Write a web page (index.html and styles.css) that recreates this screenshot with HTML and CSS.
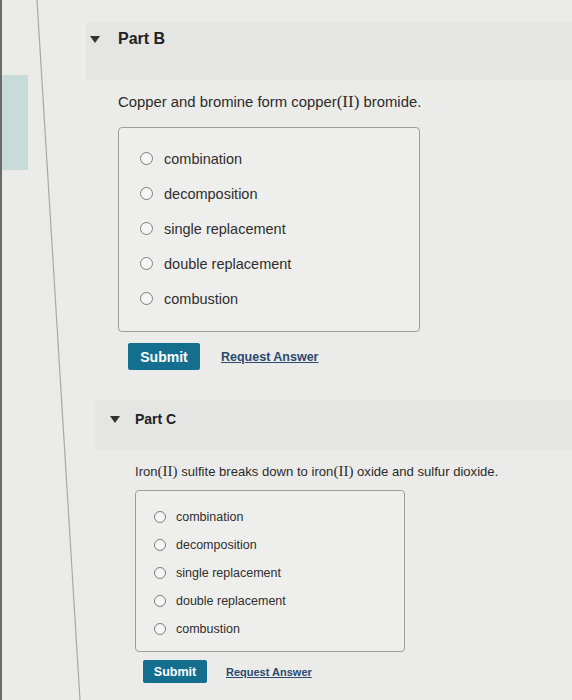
FILE: index.html
```html
<!DOCTYPE html>
<html lang="en">
<head>
    <meta charset="UTF-8">
    <meta name="viewport" content="width=device-width, initial-scale=1.0">
    <title>Parts B and C</title>
    <link rel="stylesheet" href="styles.css">
</head>
<body>
    <div class="page">
        <div class="rail">
            <svg width="86" height="700" viewBox="0 0 86 700">
                <rect x="0" y="0" width="2" height="700" fill="#6a6a6a"/>
                <rect x="2" y="75" width="26" height="95" fill="#c8dbd8"/>
                <line x1="37" y1="0" x2="80" y2="700" stroke="#a9a9a9" stroke-width="1.2"/>
            </svg>
        </div>

        <div class="main">
            <div class="part part-b">
                <div class="part-head">
                    <svg class="caret" width="10" height="7" viewBox="0 0 10 7"><path d="M0 0 L10 0 L5 7 Z" fill="#333"/></svg>
                    <span class="part-title">Part B</span>
                </div>
                <div class="part-body">
                    <p class="question">Copper and bromine form copper<span class="roman">(II)</span> bromide.</p>
                    <div class="choices">
                        <label class="choice"><span class="radio"></span>combination</label>
                        <label class="choice"><span class="radio"></span>decomposition</label>
                        <label class="choice"><span class="radio"></span>single replacement</label>
                        <label class="choice"><span class="radio"></span>double replacement</label>
                        <label class="choice"><span class="radio"></span>combustion</label>
                    </div>
                    <div class="actions">
                        <button type="button" class="submit">Submit</button>
                        <a href="#" class="request">Request Answer</a>
                    </div>
                </div>
            </div>

            <div class="part part-c">
                <div class="part-head">
                    <svg class="caret" width="10" height="7" viewBox="0 0 10 7"><path d="M0 0 L10 0 L5 7 Z" fill="#333"/></svg>
                    <span class="part-title">Part C</span>
                </div>
                <div class="part-body">
                    <p class="question">Iron<span class="roman">(II)</span> sulfite breaks down to iron<span class="roman">(II)</span> oxide and sulfur dioxide.</p>
                    <div class="choices">
                        <label class="choice"><span class="radio"></span>combination</label>
                        <label class="choice"><span class="radio"></span>decomposition</label>
                        <label class="choice"><span class="radio"></span>single replacement</label>
                        <label class="choice"><span class="radio"></span>double replacement</label>
                        <label class="choice"><span class="radio"></span>combustion</label>
                    </div>
                    <div class="actions">
                        <button type="button" class="submit">Submit</button>
                        <a href="#" class="request">Request Answer</a>
                    </div>
                </div>
            </div>
        </div>
    </div>
</body>
</html>
```

FILE: styles.css
```css
body {
    margin: 0;
    font-family: "Liberation Sans", Arial, sans-serif;
    background-color: #ebebe9;
    color: #2b2b2b;
}

.page {
    display: flex;
    height: 700px;
    overflow: hidden;
}

.rail {
    width: 86px;
    flex-shrink: 0;
}

.rail svg {
    display: block;
}

.main {
    flex: 1;
}

.part-head {
    display: flex;
    align-items: flex-start;
    box-sizing: border-box;
    background-color: #e5e5e3;
}

.caret {
    margin-top: 6px;
}

.part-title {
    font-weight: bold;
    color: #222;
}

.question {
    margin: 0;
}

.roman {
    font-family: "Liberation Serif", "Times New Roman", serif;
    font-size: 1.15em;
}

.choices {
    box-sizing: border-box;
    border: 1px solid #9c9c9c;
    border-radius: 4px;
    background-color: #eeeeec;
}

.choice {
    display: flex;
    align-items: center;
    color: #2e2e2e;
}

.radio {
    box-sizing: border-box;
    border: 1.5px solid #7d7d7d;
    border-radius: 50%;
    background-color: #f6f6f6;
}

.actions {
    display: flex;
    align-items: center;
}

.submit {
    background-color: #146f8f;
    color: #fff;
    border: none;
    border-radius: 2px;
    font-family: inherit;
    font-weight: bold;
    padding: 0;
    cursor: pointer;
}

.request {
    color: #2c4a6e;
    font-weight: bold;
    text-decoration: underline;
}

/* Part B */
.part-b {
    padding-top: 22px;
}

.part-b .part-head {
    height: 58px;
    padding: 8px 0 0 4px;
    gap: 18px;
}

.part-b .part-title {
    font-size: 16px;
    line-height: 18px;
}

.part-b .part-body {
    padding-left: 32px;
}

.part-b .question {
    margin-top: 13px;
    font-size: 14.85px;
    line-height: 18px;
}

.part-b .choices {
    margin-top: 16px;
    width: 302px;
    height: 205px;
    padding: 13px 0 0 21px;
}

.part-b .choice {
    height: 35px;
    gap: 11px;
    font-size: 14.5px;
}

.part-b .radio {
    width: 13px;
    height: 13px;
}

.part-b .actions {
    margin-top: 11px;
    padding-left: 10px;
    gap: 21px;
}

.part-b .submit {
    width: 72px;
    height: 27px;
    font-size: 14px;
}

.part-b .request {
    font-size: 12.5px;
}

/* Part C */
.part-c {
    margin-top: 30px;
    margin-left: 9px;
}

.part-c .part-head {
    height: 50px;
    padding: 11px 0 0 15px;
    gap: 15px;
}

.part-c .caret {
    margin-top: 5px;
}

.part-c .part-title {
    font-size: 14px;
    line-height: 16px;
}

.part-c .part-body {
    padding-left: 40px;
}

.part-c .question {
    margin-top: 13px;
    font-size: 13.1px;
    line-height: 16px;
}

.part-c .choices {
    margin-top: 10px;
    width: 270px;
    height: 162px;
    padding: 12px 0 0 18px;
}

.part-c .choice {
    height: 28px;
    gap: 10px;
    font-size: 12.5px;
}

.part-c .radio {
    width: 12px;
    height: 12px;
}

.part-c .actions {
    margin-top: 8px;
    padding-left: 8px;
    gap: 19px;
}

.part-c .submit {
    width: 64px;
    height: 23px;
    font-size: 12.5px;
}

.part-c .request {
    font-size: 11px;
}
```
